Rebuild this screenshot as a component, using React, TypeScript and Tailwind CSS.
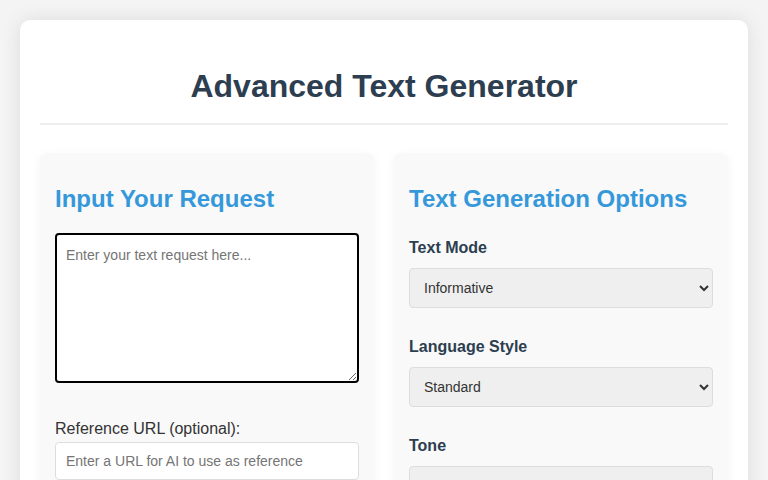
export default function App() {
  const font = { fontFamily: '"Liberation Sans", Arial, sans-serif' };
  return (
    <div className="min-h-screen bg-[#f4f4f4] px-5 pt-5" style={font}>
      <div className="rounded-[10px] bg-white p-5 shadow-[0_0_20px_rgba(0,0,0,0.1)]">
        <header className="border-b-2 border-[#eee] pb-[18px] pt-[28px] text-center">
          <h1 className="text-[32px] font-bold leading-[37px] text-[#2c3e50]">Advanced Text Generator</h1>
        </header>

        <div className="mt-[28px] grid grid-cols-2 gap-5">
          {/* left */}
          <section className="rounded-lg bg-[#f9f9f9] p-[15px] pt-[32px] shadow-[0_2px_10px_rgba(0,0,0,0.05)]">
            <h2 className="text-2xl font-bold leading-[28px] text-[#3498db]">Input Your Request</h2>
            <textarea
              className="mt-[20px] block h-[150px] w-full resize-y rounded border-2 border-black bg-white px-[9px] py-[10px] text-sm text-[#333] outline-none placeholder:text-[#757575]"
              placeholder="Enter your text request here..."
            />
            <label className="mt-[37px] block text-base leading-[18px] text-[#333]">Reference URL (optional):</label>
            <input
              className="mt-[4px] block h-[38px] w-full rounded border border-[#ddd] bg-white px-[10px] text-sm outline-none placeholder:text-[#757575]"
              placeholder="Enter a URL for AI to use as reference"
            />
          </section>

          {/* right */}
          <section className="rounded-lg bg-[#f9f9f9] p-[15px] pt-[32px] shadow-[0_2px_10px_rgba(0,0,0,0.05)]">
            <h2 className="text-2xl font-bold leading-[28px] text-[#3498db]">Text Generation Options</h2>
            <div className="mt-[26px] flex flex-col gap-[30px]">
              {[
                ['Text Mode', 'Informative'],
                ['Language Style', 'Standard'],
                ['Tone', 'Neutral'],
              ].map(([label, val]) => (
                <div key={label}>
                  <label className="block text-base font-bold leading-[18px] text-[#2c3e50]">{label}</label>
                  <select
                    defaultValue={val}
                    className="mt-[11px] block h-[40px] w-full rounded border border-[#ddd] bg-[#efefef] px-[10px] text-sm text-[#333]"
                  >
                    <option>{val}</option>
                  </select>
                </div>
              ))}
            </div>
          </section>
        </div>
      </div>
    </div>
  );
}
